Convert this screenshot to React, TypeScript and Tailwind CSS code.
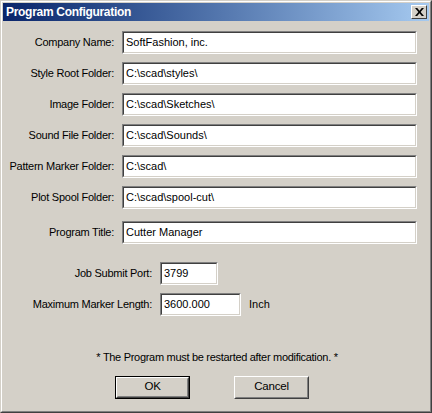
import React from "react";

const font = { fontFamily: '"Liberation Sans", Arial, sans-serif' };

function Sunken({ value, className }: { value: string; className: string }) {
  return (
    <div className={`border border-t-[#808080] border-l-[#808080] border-b-white border-r-white ${className}`}>
      <div className="h-full border border-t-[#404040] border-l-[#404040] border-b-[#d4d0c8] border-r-[#d4d0c8] bg-white pl-[2px] flex items-center text-[11px] text-black">
        {value}
      </div>
    </div>
  );
}

function Button({ label, isDefault }: { label: string; isDefault?: boolean }) {
  return (
    <div className={`w-[75px] h-[23px] ${isDefault ? "border border-black" : ""}`}>
      <div className="h-full border border-t-white border-l-white border-b-[#404040] border-r-[#404040]">
        <div className="h-full border border-t-[#d4d0c8] border-l-[#d4d0c8] border-b-[#808080] border-r-[#808080] flex items-center justify-center text-[11.5px] text-black tracking-[-0.2px]">
          {label}
        </div>
      </div>
    </div>
  );
}

const rows: [string, string][] = [
  ["Company Name:", "SoftFashion, inc."],
  ["Style Root Folder:", "C:\\scad\\styles\\"],
  ["Image Folder:", "C:\\scad\\Sketches\\"],
  ["Sound File Folder:", "C:\\scad\\Sounds\\"],
  ["Pattern Marker Folder:", "C:\\scad\\"],
  ["Plot Spool Folder:", "C:\\scad\\spool-cut\\"],
];

const labelCls = "absolute right-full mr-[8px] whitespace-nowrap text-[11px] tracking-[-0.25px] text-black";

export default function App() {
  return (
    <div style={font} className="w-[432px] h-[413px] bg-[#d4d0c8] border border-t-[#d4d0c8] border-l-[#d4d0c8] border-b-[#404040] border-r-[#404040]">
      <div className="h-full border border-t-white border-l-white border-b-[#808080] border-r-[#808080] p-[1px] flex flex-col">
        <div className="h-[18px] flex items-center justify-between pl-[3px] pr-[2px] bg-gradient-to-r from-[#0a246a] to-[#a6caf0]">
          <span className="text-white font-bold text-[12px] leading-none tracking-[-0.3px]">
            Program Configuration
          </span>
          <div className="w-[16px] h-[14px] bg-[#d4d0c8] border border-t-white border-l-white border-b-[#404040] border-r-[#404040] flex items-center justify-center">
            <svg width="9" height="8" viewBox="0 0 9 8">
              <path d="M0 0h2.2L4.5 2.7 6.8 0H9L5.6 4 9 8H6.8L4.5 5.3 2.2 8H0l3.4-4z" fill="#000" />
            </svg>
          </div>
        </div>
        <div className="flex flex-col pt-[10px] pl-[119px] pr-[12px] gap-[8px]">
          {rows.map(([l, v]) => (
            <div key={l} className="flex items-center relative h-[23px]">
              <span className={labelCls}>{l}</span>
              <Sunken value={v} className="w-full h-[23px]" />
            </div>
          ))}
          <div className="flex items-center relative h-[23px] mt-[4px]">
            <span className={labelCls}>Program Title:</span>
            <Sunken value="Cutter Manager" className="w-full h-[23px]" />
          </div>
        </div>
        <div className="flex flex-col pl-[157px] mt-[18px] gap-[8px]">
          <div className="flex items-center relative h-[23px]">
            <span className={labelCls}>Job Submit Port:</span>
            <Sunken value="3799" className="w-[58px] h-[23px]" />
          </div>
          <div className="flex items-center relative h-[23px]">
            <span className={labelCls}>Maximum Marker Length:</span>
            <Sunken value="3600.000" className="w-[81px] h-[23px]" />
            <span className="ml-[8px] text-[11px] text-black">Inch</span>
          </div>
        </div>
        <div className="mt-[33px] text-center text-[11px] tracking-[-0.3px] text-black pl-[2px]">* The Program must be restarted after modification. *</div>
        <div className="mt-[10px] flex pl-[112px] gap-[44px]">
          <Button label="OK" isDefault />
          <Button label="Cancel" />
        </div>
      </div>
    </div>
  );
}
